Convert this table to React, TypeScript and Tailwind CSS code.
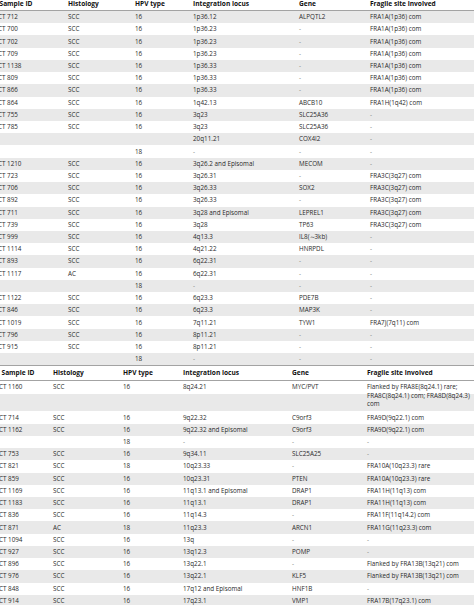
type Row = [string, string, string, string, string, string];

const first: Row[] = [
  ['CT 712', 'SCC', '16', '1p36.12', 'ALPQTL2', 'FRA1A(1p36) com'],
  ['CT 700', 'SCC', '16', '1p36.23', '-', 'FRA1A(1p36) com'],
  ['CT 702', 'SCC', '16', '1p36.23', '-', 'FRA1A(1p36) com'],
  ['CT 709', 'SCC', '16', '1p36.23', '-', 'FRA1A(1p36) com'],
  ['CT 1138', 'SCC', '16', '1p36.33', '-', 'FRA1A(1p36) com'],
  ['CT 809', 'SCC', '16', '1p36.33', '-', 'FRA1A(1p36) com'],
  ['CT 866', 'SCC', '16', '1p36.33', '-', 'FRA1A(1p36) com'],
  ['CT 864', 'SCC', '16', '1q42.13', 'ABCB10', 'FRA1H(1q42) com'],
  ['CT 755', 'SCC', '16', '3q23', 'SLC25A36', '-'],
  ['CT 785', 'SCC', '16', '3q23', 'SLC25A36', '-'],
  ['', '', '', '20q11.21', 'COX4I2', '-'],
  ['', '', '18', '-', '-', '-'],
  ['CT 1210', 'SCC', '16', '3q26.2 and Episomal', 'MECOM', '-'],
  ['CT 723', 'SCC', '16', '3q26.31', '-', 'FRA3C(3q27) com'],
  ['CT 706', 'SCC', '16', '3q26.33', 'SOX2', 'FRA3C(3q27) com'],
  ['CT 892', 'SCC', '16', '3q26.33', '-', 'FRA3C(3q27) com'],
  ['CT 711', 'SCC', '16', '3q28 and Episomal', 'LEPREL1', 'FRA3C(3q27) com'],
  ['CT 739', 'SCC', '16', '3q28', 'TP63', 'FRA3C(3q27) com'],
  ['CT 999', 'SCC', '16', '4q13.3', 'IL8(\u223c3kb)', '-'],
  ['CT 1114', 'SCC', '16', '4q21.22', 'HNRPDL', '-'],
  ['CT 893', 'SCC', '16', '6q22.31', '-', '-'],
  ['CT 1117', 'AC', '16', '6q22.31', '-', '-'],
  ['', '', '18', '-', '-', '-'],
  ['CT 1122', 'SCC', '16', '6q23.3', 'PDE7B', '-'],
  ['CT 846', 'SCC', '16', '6q23.3', 'MAP3K', '-'],
  ['CT 1019', 'SCC', '16', '7q11.21', 'TYW1', 'FRA7J(7q11) com'],
  ['CT 796', 'SCC', '16', '8p11.21', '-', '-'],
  ['CT 915', 'SCC', '16', '8p11.21', '-', '-'],
  ['', '', '18', '-', '-', '-'],
];

const second: Row[] = [
  ['CT 714', 'SCC', '16', '9q22.32', 'C9orf3', 'FRA9D(9q22.1) com'],
  ['CT 1162', 'SCC', '16', '9q22.32 and Episomal', 'C9orf3', 'FRA9D(9q22.1) com'],
  ['', '', '18', '-', '-', '-'],
  ['CT 753', 'SCC', '16', '9q34.11', 'SLC25A25', '-'],
  ['CT 821', 'SCC', '18', '10q23.33', '-', 'FRA10A(10q23.3) rare'],
  ['CT 859', 'SCC', '16', '10q23.31', 'PTEN', 'FRA10A(10q23.3) rare'],
  ['CT 1169', 'SCC', '16', '11q13.1 and Episomal', 'DRAP1', 'FRA11H(11q13) com'],
  ['CT 1183', 'SCC', '16', '11q13.1', 'DRAP1', 'FRA11H(11q13) com'],
  ['CT 836', 'SCC', '16', '11q14.3', '-', 'FRA11F(11q14.2) com'],
  ['CT 871', 'AC', '18', '11q23.3', 'ARCN1', 'FRA11G(11q23.3) com'],
  ['CT 1094', 'SCC', '16', '13q', '-', '-'],
  ['CT 927', 'SCC', '16', '13q12.3', 'POMP', '-'],
  ['CT 896', 'SCC', '16', '13q22.1', '-', 'Flanked by FRA13B(13q21) com'],
  ['CT 976', 'SCC', '16', '13q22.1', 'KLF5', 'Flanked by FRA13B(13q21) com'],
  ['CT 848', 'SCC', '16', '17q12 and Episomal', 'HNF1B', '-'],
  ['CT 914', 'SCC', '16', '17q23.1', 'VMP1', 'FRA17B(17q23.1) com'],
];

const headers = ['Sample ID', 'Histology', 'HPV type', 'Integration locus', 'Gene', 'Fragile site involved'];

const COLS1 = 'grid grid-cols-[70px_67px_58px_106px_71px_1fr] ml-[-2px]';
const COLS2 = 'grid grid-cols-[54px_70px_60px_109px_75px_1fr] ml-[-1px]';

function Cell({ v, first }: { v: string; first?: boolean }) {
  const dash = v === '-';
  return (
    <div className={`whitespace-nowrap ${first ? '' : ''} ${dash ? 'text-[#8a8a8a]' : 'text-[#2a2a2a]'}`}>
      {v}
    </div>
  );
}

function BodyRow({ row, cols, striped }: { row: Row; cols: string; striped: boolean }) {
  return (
    <div className={`${cols} h-[12.22px] items-center leading-[8px] ${striped ? 'bg-[#e9e9e9]' : 'bg-white'}`}>
      {row.map((v, i) => (
        <Cell key={i} v={v} first={i === 0} />
      ))}
    </div>
  );
}

export default function App() {
  return (
    <div className="w-[474px] h-[605px] overflow-hidden bg-white font-['Open_Sans',sans-serif] text-[6.3px]">
      {/* first block */}
      <div className={`${COLS1} h-[10px] items-end pb-[2.5px] leading-[8px] font-bold text-[6.6px] text-[#111]`}>
        {headers.map((h, i) => (
          <div key={h} className={`whitespace-nowrap ${i === 0 ? 'pl-[1.5px]' : ''}`}>
            {h}
          </div>
        ))}
      </div>
      <div className="border-t-[1.5px] border-[#a3a3a3]">
        {first.map((r, i) => (
          <BodyRow key={i} row={r} cols={COLS1} striped={i % 2 === 0} />
        ))}
      </div>

      {/* second block */}
      <div
        className={`${COLS2} h-[15.6px] items-center border-y-[1.5px] border-[#a3a3a3] leading-[8px] font-bold text-[6.6px] text-[#111]`}
      >
        {headers.map((h, i) => (
          <div key={h} className={`whitespace-nowrap ${i === 0 ? 'pl-[2.5px]' : ''}`}>
            {h}
          </div>
        ))}
      </div>
      <div
        className={`${COLS2} h-[30.5px] items-start pt-[2.5px] leading-[8.5px] text-[#2a2a2a] bg-[linear-gradient(to_bottom,#ffffff_13.5px,#e9e9e9_13.5px)]`}
      >
        <div className="whitespace-nowrap">CT 1160</div>
        <div>SCC</div>
        <div>16</div>
        <div>8q24.21</div>
        <div>MYC/PVT</div>
        <div className="whitespace-nowrap">
          Flanked by FRA8E(8q24.1) rare;
          <br />
          FRA8C(8q24.1) com; FRA8D(8q24.3)
          <br />
          com
        </div>
      </div>
      {second.map((r, i) => (
        <BodyRow key={i} row={r} cols={COLS2} striped={i % 2 === 1} />
      ))}
    </div>
  );
}
